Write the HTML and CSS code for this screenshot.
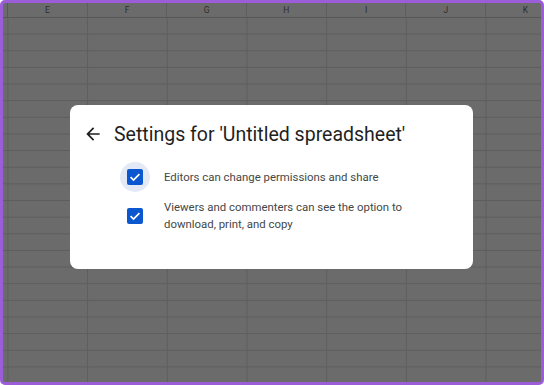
FILE: index.html
```html
<!DOCTYPE html>
<html lang="en">
<head>
	<meta charset="UTF-8">
	<title>Settings for 'Untitled spreadsheet'</title>
	<link rel="stylesheet" href="styles.css">
</head>
<body>
	<div class="frame">
		<!-- dimmed spreadsheet behind the dialog -->
		<div class="sheet">
			<div class="colhead">
				<div class="corner"></div>
				<div class="col">E</div>
				<div class="col">F</div>
				<div class="col">G</div>
				<div class="col">H</div>
				<div class="col">I</div>
				<div class="col">J</div>
				<div class="col">K</div>
			</div>
			<div class="cells"></div>
		</div>

		<!-- settings dialog -->
		<div class="dialog">
			<div class="dlg-head">
				<svg class="back" viewBox="0 0 24 24" width="20" height="20"><path d="M20 11H7.83l5.59-5.59L12 4l-8 8 8 8 1.41-1.41L7.83 13H20v-2z" fill="#1f1f1f"/></svg>
				<h1>Settings for 'Untitled spreadsheet'</h1>
			</div>
			<ul class="opts">
				<li class="opt">
					<span class="cb-wrap focus">
						<span class="cb"><svg viewBox="0 0 16 16" width="16" height="16"><path d="M3.6 8.2l2.9 2.8 5.9-5.9" fill="none" stroke="#fff" stroke-width="1.7"/></svg></span>
					</span>
					<span class="label">Editors can change permissions and share</span>
				</li>
				<li class="opt">
					<span class="cb-wrap">
						<span class="cb"><svg viewBox="0 0 16 16" width="16" height="16"><path d="M3.6 8.2l2.9 2.8 5.9-5.9" fill="none" stroke="#fff" stroke-width="1.7"/></svg></span>
					</span>
					<span class="label">Viewers and commenters can see the option to<br>download, print, and copy</span>
				</li>
			</ul>
		</div>
	</div>
</body>
</html>
```

FILE: styles.css
```css
*{
	margin: 0;
	padding: 0;
	box-sizing: border-box;
}
body {
	width: 544px;
	height: 385px;
	overflow: hidden;
	font-family: Roboto, "Liberation Sans", sans-serif;
}
ul li{
	list-style: none;
}
.frame {
	position: relative;
	width: 544px;
	height: 385px;
	border: 3px solid #9b5dd8;
	border-radius: 5px;
	overflow: hidden;
	background: #6b6b6b;
}
.sheet {
	display: flex;
	flex-direction: column;
	height: 100%;
}
.colhead {
	display: flex;
	height: 15px;
	flex: none;
	border-bottom: 1px solid #575757;
}
.corner {
	width: 5px;
	flex: none;
	border-right: 1px solid #575757;
}
.col {
	width: 79.7px;
	flex: none;
	border-right: 1px solid #5e5e5e;
	text-align: center;
	font-size: 8.5px;
	line-height: 14px;
	color: #2e2e2e;
}
.cells {
	flex: 1;
	background-color: #6b6b6b;
	background-image:
		linear-gradient(to right, #5e5e5e 1px, transparent 1px),
		linear-gradient(to bottom, #5d5d5d 1px, transparent 1px);
	background-size: 79.7px 16.65px;
	background-position: 4.4px 15.6px;
}
.dialog {
	position: absolute;
	left: 67px;
	top: 102px;
	width: 403px;
	height: 164px;
	background: #fff;
	border-radius: 8px;
	padding: 18px 13px 0;
}
.dlg-head {
	display: flex;
	align-items: center;
	height: 22px;
}
.back {
	flex: none;
	margin-right: 11px;
}
.dlg-head h1 {
	font-weight: 400;
	font-size: 19.5px;
	color: #1f1f1f;
}
.opts {
	margin: 17px 0 0 37px;
	display: flex;
	flex-direction: column;
	gap: 7px;
}
.opt {
	display: flex;
	align-items: center;
	gap: 14px;
}
.cb-wrap {
	width: 30px;
	height: 30px;
	border-radius: 50%;
	display: flex;
	align-items: center;
	justify-content: center;
	flex: none;
}
.cb-wrap.focus {
	background: #e3eaf6;
}
.cb {
	width: 16px;
	height: 16px;
	border-radius: 2px;
	background: #0b57d0;
	display: block;
}
.cb svg {
	display: block;
}
.label {
	font-size: 11.4px;
	line-height: 16.5px;
	color: #444746;
}
```
